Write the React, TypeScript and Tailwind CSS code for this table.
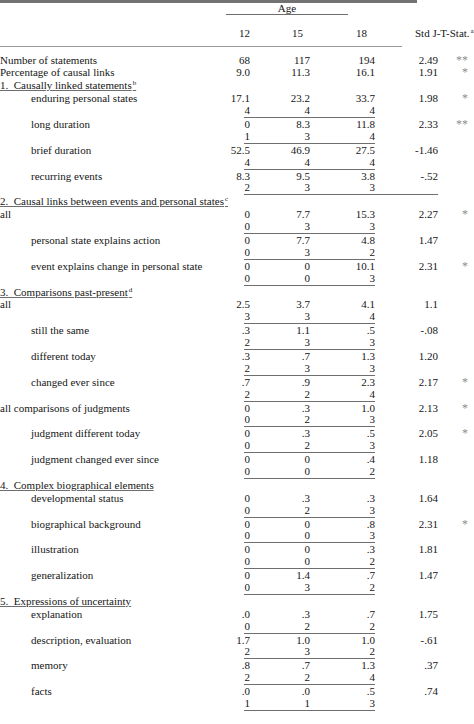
type Row = {
  label: string;
  indent?: boolean;
  v: [string, string, string];
  stat: string;
  star?: string;
  sub?: [string, string, string];
  wide?: boolean;
};

type Section = { title?: string; sup?: string; rows: Row[] };

const sections: Section[] = [
  {
    rows: [
      { label: 'Number of statements', v: ['68', '117', '194'], stat: '2.49', star: '**' },
      { label: 'Percentage of causal links', v: ['9.0', '11.3', '16.1'], stat: '1.91', star: '*' },
    ],
  },
  {
    title: '1.  Causally linked statements',
    sup: 'b',
    rows: [
      { label: 'enduring personal states', indent: true, v: ['17.1', '23.2', '33.7'], stat: '1.98', star: '*', sub: ['4', '4', '4'] },
      { label: 'long duration', indent: true, v: ['0', '8.3', '11.8'], stat: '2.33', star: '**', sub: ['1', '3', '4'] },
      { label: 'brief duration', indent: true, v: ['52.5', '46.9', '27.5'], stat: '-1.46', sub: ['4', '4', '4'] },
      { label: 'recurring events', indent: true, v: ['8.3', '9.5', '3.8'], stat: '-.52', sub: ['2', '3', '3'], wide: true },
    ],
  },
  {
    title: '2.  Causal links between events and personal states',
    sup: 'c',
    rows: [
      { label: 'all', v: ['0', '7.7', '15.3'], stat: '2.27', star: '*', sub: ['0', '3', '3'] },
      { label: 'personal state explains action', indent: true, v: ['0', '7.7', '4.8'], stat: '1.47', sub: ['0', '3', '2'] },
      { label: 'event explains change in personal state', indent: true, v: ['0', '0', '10.1'], stat: '2.31', star: '*', sub: ['0', '0', '3'] },
    ],
  },
  {
    title: '3.  Comparisons past-present',
    sup: 'd',
    rows: [
      { label: 'all', v: ['2.5', '3.7', '4.1'], stat: '1.1', sub: ['3', '3', '4'] },
      { label: 'still the same', indent: true, v: ['.3', '1.1', '.5'], stat: '-.08', sub: ['2', '3', '3'] },
      { label: 'different today', indent: true, v: ['.3', '.7', '1.3'], stat: '1.20', sub: ['2', '3', '3'] },
      { label: 'changed ever since', indent: true, v: ['.7', '.9', '2.3'], stat: '2.17', star: '*', sub: ['2', '2', '4'] },
      { label: 'all comparisons of judgments', v: ['0', '.3', '1.0'], stat: '2.13', star: '*', sub: ['0', '2', '3'] },
      { label: 'judgment different today', indent: true, v: ['0', '.3', '.5'], stat: '2.05', star: '*', sub: ['0', '2', '3'] },
      { label: 'judgment changed ever since', indent: true, v: ['0', '0', '.4'], stat: '1.18', sub: ['0', '0', '2'] },
    ],
  },
  {
    title: '4.  Complex biographical elements',
    rows: [
      { label: 'developmental status', indent: true, v: ['0', '.3', '.3'], stat: '1.64', sub: ['0', '2', '3'] },
      { label: 'biographical background', indent: true, v: ['0', '0', '.8'], stat: '2.31', star: '*', sub: ['0', '0', '3'] },
      { label: 'illustration', indent: true, v: ['0', '0', '.3'], stat: '1.81', sub: ['0', '0', '2'] },
      { label: 'generalization', indent: true, v: ['0', '1.4', '.7'], stat: '1.47', sub: ['0', '3', '2'] },
    ],
  },
  {
    title: '5.  Expressions of uncertainty',
    rows: [
      { label: 'explanation', indent: true, v: ['.0', '.3', '.7'], stat: '1.75', sub: ['0', '2', '2'] },
      { label: 'description, evaluation', indent: true, v: ['1.7', '1.0', '1.0'], stat: '-.61', sub: ['2', '3', '2'] },
      { label: 'memory', indent: true, v: ['.8', '.7', '1.3'], stat: '.37', sub: ['2', '2', '4'] },
      { label: 'facts', indent: true, v: ['.0', '.0', '.5'], stat: '.74', sub: ['1', '1', '3'] },
    ],
  },
];

function Sup({ c }: { c: string }) {
  return <span className="align-[4px] text-[7px] leading-none ml-[1px]">{c}</span>;
}

function DataRow({ row }: { row: Row }) {
  return (
    <>
      <div className="flex h-[12.9px] leading-[12.9px] whitespace-nowrap">
        <div className={`w-[210px] shrink-0 ${row.indent ? 'pl-[31px]' : ''}`}>{row.label}</div>
        <div className="w-[40px] shrink-0 text-right">{row.v[0]}</div>
        <div className="w-[60px] shrink-0 text-right">{row.v[1]}</div>
        <div className="w-[65px] shrink-0 text-right">{row.v[2]}</div>
        <div className="w-[63px] shrink-0 text-right">{row.stat}</div>
        <div className="w-[30px] shrink-0 text-right text-[12px] leading-[12.9px] text-[#8c8c8c]">{row.star}</div>
      </div>
      {row.sub && (
        <div
          className={`ml-[244px] flex h-[12.9px] leading-[11.9px] border-b border-[#6e6e6e] ${
            row.wide ? 'w-[194px]' : 'w-[131px]'
          }`}
        >
          <div className="w-[6px] shrink-0 text-right">{row.sub[0]}</div>
          <div className="w-[60px] shrink-0 text-right">{row.sub[1]}</div>
          <div className="w-[65px] shrink-0 text-right">{row.sub[2]}</div>
        </div>
      )}
    </>
  );
}

export default function App() {
  return (
    <div className="w-[474px] h-[724px] bg-white text-[#161616] text-[11px] font-['Liberation_Serif',serif] overflow-hidden">
      <div className="h-[3px] w-[417px] bg-[#727272]" />
      <div className="ml-[226px] w-[122px] h-[12px] leading-[11px] text-center border-b border-[#6e6e6e]">
        Age
      </div>
      <div className="flex items-end h-[32px] pb-[6px] w-[402px] border-b border-[#9a9a9a] leading-[13px] whitespace-nowrap">
        <div className="w-[250px] shrink-0 text-right">12</div>
        <div className="w-[60px] shrink-0 text-right pr-[7px]">15</div>
        <div className="w-[65px] shrink-0 text-right pr-[8px]">18</div>
        <div className="shrink-0 pl-[40px]">
          Std J-T-Stat.
          <Sup c="a" />
        </div>
      </div>
      <div className="mt-[6.5px] flex flex-col">
        {sections.map((s, i) => (
          <div key={i} className="flex flex-col">
            {s.title && (
              <div className="h-[12.9px] leading-[12.9px] whitespace-pre">
                <span className="underline decoration-[#6e6e6e] underline-offset-[1px]">
                  {s.title}
                  {s.sup && <Sup c={s.sup} />}
                </span>
              </div>
            )}
            {s.rows.map((r, j) => (
              <DataRow key={j} row={r} />
            ))}
          </div>
        ))}
      </div>
    </div>
  );
}
